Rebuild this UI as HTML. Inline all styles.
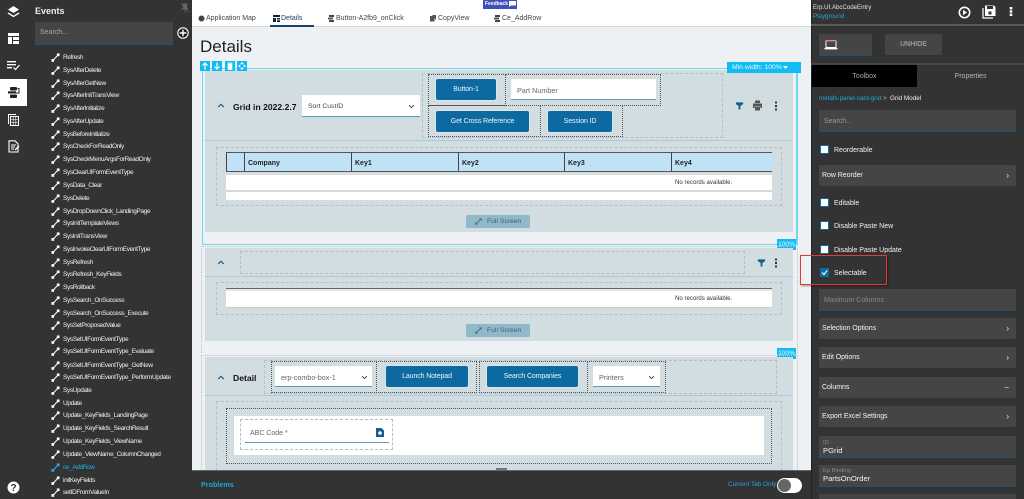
<!DOCTYPE html>
<html><head><meta charset="utf-8"><title>Details</title>
<style>
html,body{margin:0;padding:0;width:1024px;height:499px;overflow:hidden;background:#eef1f4;font-family:"Liberation Sans",sans-serif}
.a{position:absolute;box-sizing:border-box}
.t{position:absolute;white-space:nowrap;line-height:12px;height:12px}
.side{left:0;top:0;width:192px;height:499px;background:#333}
.ev{position:absolute;left:63px;margin-top:1px;font-size:6.5px;letter-spacing:-.37px;line-height:10px;color:#f0f0f0;white-space:nowrap}
.ev svg{position:absolute;left:-12px;top:0}
.card{background:#d2dde1}
.btn{position:absolute;background:#0c6aa0;color:#eef6fa;border-radius:2px;font-size:7px;letter-spacing:-.12px;text-align:center;line-height:22px;height:21px;box-shadow:0 0 0 1px #dbe6ea}
.dd{position:absolute;border:1px dotted #555;box-sizing:border-box}
.dl{position:absolute;border:1px dashed #b5c0c4;box-sizing:border-box}
.inp{position:absolute;background:#fff;border-bottom:1px solid #5c9ac4;box-sizing:border-box;font-size:7px;color:#666;padding-left:6px;height:21px;line-height:24px}
.th{position:absolute;top:152px;height:20px;line-height:21px;background:#bfe2f6;font-size:7px;font-weight:bold;color:#222;padding-left:3px;box-sizing:border-box;border-top:1px solid #555;border-bottom:1px solid #555;border-left:1px solid #444}
.fs{position:absolute;left:466px;width:64px;height:13px;background:#8fb9c9;border-radius:2px;font-size:6.8px;line-height:13px;color:#465c68;padding-left:21px;box-sizing:border-box}
.tag{position:absolute;background:#12bcf2;color:#eefaff;font-size:6.6px;text-align:center;line-height:11px;height:11px}
.row{position:absolute;left:819px;width:197px;background:#454545;border-radius:2px;height:21px;line-height:21.5px;font-size:7px;letter-spacing:-.05px;color:#f4f4f4;padding-left:3px;box-sizing:border-box}
.row i{position:absolute;right:7px;top:0;font-style:normal;font-size:8px}
.chk{position:absolute;left:820px;width:9px;height:9px;background:#fff;border:1px solid #0c6aa0;box-sizing:border-box}
.lbl{position:absolute;left:834px;margin-top:1px;font-size:7px;color:#f2f2f2;line-height:10px;white-space:nowrap}
.fld{position:absolute;left:819px;width:197px;height:22px;background:#454545;border-bottom:1px solid #14567f;box-sizing:border-box}
.tab{position:absolute;top:14px;font-size:7px;color:#444;line-height:10px;white-space:nowrap}
</style></head><body>

<svg width="0" height="0" style="position:absolute"><defs>
<symbol id="ln" viewBox="0 0 10 10"><path d="M2 8.5 L8 2" stroke="#fff" stroke-width="1.2"/><rect x="0.5" y="6.8" width="3" height="3" fill="#fff"/><rect x="6.5" y="0.5" width="3" height="3" fill="#fff"/></symbol>
<symbol id="lb" viewBox="0 0 10 10"><path d="M2 8.5 L8 2" stroke="#1fb0e6" stroke-width="1.2"/><rect x="0.5" y="6.8" width="3" height="3" fill="#1fb0e6"/><rect x="6.5" y="0.5" width="3" height="3" fill="#1fb0e6"/></symbol>
<symbol id="flt" viewBox="0 0 10 10"><path d="M1 1.5H9V3.5L6 5.5V9.5H4V5.5L1 3.5Z" fill="#155f8e"/></symbol>
<symbol id="dots" viewBox="0 0 4 10"><rect x="1" y="0.5" width="2" height="2" fill="#333"/><rect x="1" y="4" width="2" height="2" fill="#333"/><rect x="1" y="7.5" width="2" height="2" fill="#333"/></symbol>
<symbol id="up" viewBox="0 0 10 6"><path d="M1.5 4.8 L5 1.5 L8.5 4.8" stroke="#155f8e" stroke-width="1.5" fill="none"/></symbol>
<symbol id="dn" viewBox="0 0 10 6"><path d="M1.5 1.2 L5 4.5 L8.5 1.2" stroke="#333" stroke-width="1.2" fill="none"/></symbol>
<symbol id="ex" viewBox="0 0 10 10"><path d="M3 7 L7 3" stroke="#4d6470" stroke-width="1"/><path d="M5.5 1.5H8.5V4.5Z M1.5 5.5V8.5H4.5Z" fill="#4d6470"/></symbol>
</defs></svg>

<!-- left sidebar -->
<div class="a side"></div>
<div class="a" style="left:0;top:79px;width:27px;height:27px;background:#fff"></div>
<svg class="a" style="left:7px;top:5px" width="13" height="13" viewBox="0 0 13 13"><path d="M6.5 1 L12 4.6 L6.5 8 L1 4.6Z" fill="#fff"/><path d="M1.5 7.5 L6.5 10.6 L11.5 7.5 L12.5 8.5 L6.5 12.3 L.5 8.5Z" fill="#fff"/></svg>
<svg class="a" style="left:8px;top:33px" width="11" height="11" viewBox="0 0 11 11"><path d="M0 0H11V3H0Z M0 4H4V11H0Z M5 4H11V7H5Z M5 8H11V11H5Z" fill="#fff"/></svg>
<svg class="a" style="left:7px;top:60px" width="13" height="11" viewBox="0 0 13 11"><path d="M0 1H9V2.4H0Z M0 4H9V5.4H0Z M0 7H5V8.4H0Z" fill="#fff"/><path d="M6.5 7.5 L8.5 9.5 L12.5 5" stroke="#fff" stroke-width="1.2" fill="none"/></svg>
<svg class="a" style="left:7px;top:86px" width="13" height="13" viewBox="0 0 13 13"><rect x="3" y="1" width="7" height="3.5" rx="1" fill="#222"/><rect x="3" y="8.5" width="7" height="3.5" rx="1" fill="#222"/><rect x="1" y="5.3" width="8" height="2.2" fill="#222"/><path d="M10.5 2.5H12V7H9" stroke="#222" fill="none"/></svg>
<svg class="a" style="left:8px;top:114px" width="11" height="12" viewBox="0 0 11 12"><rect x="2.5" y="2.5" width="8" height="9" fill="none" stroke="#fff"/><path d="M2.5 5.5H10.5 M2.5 8.5H10.5 M5.2 2.5V11.5 M7.8 2.5V11.5" stroke="#fff" stroke-width=".6"/><path d="M.5 10V.5H8" stroke="#fff" fill="none"/></svg>
<svg class="a" style="left:8px;top:140px" width="12" height="13" viewBox="0 0 12 13"><path d="M1 .8H7L10 3.8V12H1Z" fill="none" stroke="#fff" stroke-width="1.1"/><path d="M3 5H8M3 7H7M3 9H6" stroke="#fff" stroke-width=".9"/><path d="M7 10 L11 6" stroke="#fff" stroke-width="1.4"/></svg>
<svg class="a" style="left:7px;top:481px" width="13" height="13" viewBox="0 0 13 13"><circle cx="6.5" cy="6.5" r="6" fill="#fff"/><text x="6.5" y="10" font-size="10" font-weight="bold" text-anchor="middle" font-family="Liberation Sans" fill="#333">?</text></svg>

<div class="t" style="left:35px;top:5px;font-size:9px;font-weight:bold;color:#eee">Events</div>
<svg class="a" style="left:180px;top:3px" width="9" height="10" viewBox="0 0 9 10"><path d="M3 1H7L6.5 4.5L8 6H2L3.5 4.5Z M5 6V9.5 M1 .5L8.5 9" stroke="#666" fill="#666" stroke-width=".7"/></svg>
<div class="a" style="left:35px;top:22px;width:138px;height:23px;background:#454545;border-bottom:1px solid #14567f;font-size:7px;line-height:22px;color:#aaa;padding-left:5px">Search...</div>
<svg class="a" style="left:177px;top:27px" width="12" height="12" viewBox="0 0 12 12"><circle cx="6" cy="6" r="5.2" fill="#222" stroke="#fff" stroke-width="1.1"/><path d="M6 2.7V9.3M2.7 6H9.3" stroke="#fff" stroke-width="1.4"/></svg>

<div class="ev" style="top:52px"><svg width="9" height="9"><use href="#ln"/></svg>Refresh</div>
<div class="ev" style="top:65px"><svg width="9" height="9"><use href="#ln"/></svg>SysAfterDelete</div>
<div class="ev" style="top:78px"><svg width="9" height="9"><use href="#ln"/></svg>SysAfterGetNew</div>
<div class="ev" style="top:90px"><svg width="9" height="9"><use href="#ln"/></svg>SysAfterInitTransView</div>
<div class="ev" style="top:103px"><svg width="9" height="9"><use href="#ln"/></svg>SysAfterInitialize</div>
<div class="ev" style="top:116px"><svg width="9" height="9"><use href="#ln"/></svg>SysAfterUpdate</div>
<div class="ev" style="top:129px"><svg width="9" height="9"><use href="#ln"/></svg>SysBeforeInitialize</div>
<div class="ev" style="top:141px"><svg width="9" height="9"><use href="#ln"/></svg>SysCheckForReadOnly</div>
<div class="ev" style="top:154px"><svg width="9" height="9"><use href="#ln"/></svg>SysCheckMenuArgsForReadOnly</div>
<div class="ev" style="top:167px"><svg width="9" height="9"><use href="#ln"/></svg>SysClearUIFormEventType</div>
<div class="ev" style="top:180px"><svg width="9" height="9"><use href="#ln"/></svg>SysData_Clear</div>
<div class="ev" style="top:193px"><svg width="9" height="9"><use href="#ln"/></svg>SysDelete</div>
<div class="ev" style="top:206px"><svg width="9" height="9"><use href="#ln"/></svg>SysDropDownClick_LandingPage</div>
<div class="ev" style="top:218px"><svg width="9" height="9"><use href="#ln"/></svg>SysInitTemplateViews</div>
<div class="ev" style="top:231px"><svg width="9" height="9"><use href="#ln"/></svg>SysInitTransView</div>
<div class="ev" style="top:244px"><svg width="9" height="9"><use href="#ln"/></svg>SysInvokeClearUIFormEventType</div>
<div class="ev" style="top:257px"><svg width="9" height="9"><use href="#ln"/></svg>SysRefresh</div>
<div class="ev" style="top:269px"><svg width="9" height="9"><use href="#ln"/></svg>SysRefresh_KeyFields</div>
<div class="ev" style="top:282px"><svg width="9" height="9"><use href="#ln"/></svg>SysRollback</div>
<div class="ev" style="top:295px"><svg width="9" height="9"><use href="#ln"/></svg>SysSearch_OnSuccess</div>
<div class="ev" style="top:308px"><svg width="9" height="9"><use href="#ln"/></svg>SysSearch_OnSuccess_Execute</div>
<div class="ev" style="top:320px"><svg width="9" height="9"><use href="#ln"/></svg>SysSetProposedValue</div>
<div class="ev" style="top:334px"><svg width="9" height="9"><use href="#ln"/></svg>SysSetUIFormEventType</div>
<div class="ev" style="top:346px"><svg width="9" height="9"><use href="#ln"/></svg>SysSetUIFormEventType_Evaluate</div>
<div class="ev" style="top:360px"><svg width="9" height="9"><use href="#ln"/></svg>SysSetUIFormEventType_GetNew</div>
<div class="ev" style="top:372px"><svg width="9" height="9"><use href="#ln"/></svg>SysSetUIFormEventType_PerformUpdate</div>
<div class="ev" style="top:385px"><svg width="9" height="9"><use href="#ln"/></svg>SysUpdate</div>
<div class="ev" style="top:398px"><svg width="9" height="9"><use href="#ln"/></svg>Update</div>
<div class="ev" style="top:410px"><svg width="9" height="9"><use href="#ln"/></svg>Update_KeyFields_LandingPage</div>
<div class="ev" style="top:423px"><svg width="9" height="9"><use href="#ln"/></svg>Update_KeyFields_SearchResult</div>
<div class="ev" style="top:436px"><svg width="9" height="9"><use href="#ln"/></svg>Update_KeyFields_ViewName</div>
<div class="ev" style="top:449px"><svg width="9" height="9"><use href="#ln"/></svg>Update_ViewName_ColumnChanged</div>
<div class="ev" style="top:462px;color:#1fb0e6"><svg width="9" height="9"><use href="#lb"/></svg>ce_AddRow</div>
<div class="ev" style="top:475px"><svg width="9" height="9"><use href="#ln"/></svg>initKeyFields</div>
<div class="ev" style="top:487px"><svg width="9" height="9"><use href="#ln"/></svg>setIDFromValueIn</div>

<!-- top tabs -->
<div class="a" style="left:192px;top:0;width:619px;height:27px;background:#fff;border-bottom:1px solid #d5d8da"></div>
<div class="tab" style="left:206px">Application Map</div>
<svg class="a" style="left:198px;top:15px" width="7" height="7" viewBox="0 0 7 7"><circle cx="3.5" cy="3.5" r="3" fill="#444"/></svg>
<svg class="a" style="left:273px;top:15px" width="7" height="7" viewBox="0 0 7 7"><path d="M0 0H7V2H0Z M0 3H3V7H0Z M4 3H7V4.5H4Z M4 5.3H7V7H4Z" fill="#123"/></svg>
<div class="tab" style="left:281px;color:#1d3a56">Details</div>
<div class="a" style="left:270px;top:25px;width:44px;height:1.5px;background:#15406a"></div>
<svg class="a" style="left:328px;top:15px" width="6" height="7" viewBox="0 0 6 7"><path d="M1 0H6V2H1Z M0 2.6H5V4.4H0Z M1 5H6V7H1Z" fill="#444"/></svg>
<div class="tab" style="left:336px">Button-A2fb9_onClick</div>
<svg class="a" style="left:430px;top:15px" width="6" height="7" viewBox="0 0 6 7"><path d="M0 1H4.5V6.5H0Z M2 0H6V5" fill="#555"/></svg>
<div class="tab" style="left:438px">CopyView</div>
<svg class="a" style="left:494px;top:15px" width="6" height="7" viewBox="0 0 6 7"><path d="M1 0H6V2H1Z M0 2.6H5V4.4H0Z M1 5H6V7H1Z" fill="#444"/></svg>
<div class="tab" style="left:502px">Ce_AddRow</div>
<div class="a" style="left:483px;top:0;width:34px;height:9px;background:#3f51b5;color:#fff;font-size:5px;font-weight:bold;line-height:8px;padding-left:2px">Feedback</div>
<svg class="a" style="left:509px;top:1px" width="7" height="6" viewBox="0 0 7 6"><path d="M0 0H7V4.5H2L0 6Z" fill="#fff"/></svg>

<div class="t" style="left:200px;top:36px;height:22px;line-height:22px;font-size:17px;color:#222">Details</div>

<!-- panel 1 -->
<div class="a" style="left:202px;top:68px;width:596px;height:177px;border:1px solid #6fd6f5;border-right-width:2px"></div>
<div class="a card" style="left:205px;top:70px;width:588px;height:162px"></div>
<div class="a" style="left:205px;top:140px;width:588px;height:1px;background:#a5ccdc"></div>
<svg class="a" style="left:217px;top:103px" width="8" height="5"><use href="#up"/></svg>
<div class="t" style="left:233px;top:100px;margin-top:1px;font-size:8.6px;font-weight:bold;color:#111">Grid in 2022.2.7</div>
<div class="inp" style="left:302px;top:95px;width:118px;height:22px;line-height:23px;color:#444;font-size:6.8px">Sort CustID</div>
<svg class="a" style="left:408px;top:104px" width="7" height="5"><use href="#dn"/></svg>

<div class="dl" style="left:422px;top:73px;width:301px;height:65px"></div>
<div class="dd" style="left:428px;top:74px;width:78px;height:32px;border-width:1.5px"></div>
<div class="dd" style="left:505px;top:74px;width:156px;height:32px;border-width:1.5px"></div>
<div class="dd" style="left:428px;top:105px;width:113px;height:32px;border-width:1.5px"></div>
<div class="dd" style="left:540px;top:105px;width:83px;height:32px;border-width:1.5px"></div>
<div class="btn" style="left:436px;top:79px;width:60px">Button-1</div>
<div class="inp" style="left:511px;top:79px;width:145px;font-size:7.2px">Part Number</div>
<div class="btn" style="left:436px;top:111px;width:93px">Get Cross Reference</div>
<div class="btn" style="left:548px;top:111px;width:64px">Session ID</div>
<svg class="a" style="left:735px;top:101px" width="9" height="9"><use href="#flt"/></svg>
<svg class="a" style="left:752px;top:100px" width="11" height="11" viewBox="0 0 11 11"><path d="M3 .5H8V3H3Z M1 3.5H10V8H8.5V6.5H2.5V8H1Z M3 7H8V10.5H3Z" fill="#555"/></svg>
<svg class="a" style="left:774px;top:101px" width="4" height="10"><use href="#dots"/></svg>
<div class="tag" style="left:727px;top:62px;width:69px;padding-left:5px;text-align:left;font-size:6.8px">Min width: 100%</div>
<svg class="a" style="left:782px;top:66px" width="7" height="4" viewBox="0 0 7 4"><path d="M1 0H6L3.5 3Z" fill="#fff"/></svg>

<!-- move buttons -->
<div class="a" style="left:200px;top:61px;width:10px;height:10px;background:#12bcf2"><svg width="10" height="10" viewBox="0 0 10 10" style="display:block"><path d="M5 8.5V2M2.5 4.5L5 2L7.5 4.5" stroke="#fff" stroke-width="1.2" fill="none"/></svg></div>
<div class="a" style="left:212px;top:61px;width:10px;height:10px;background:#12bcf2"><svg width="10" height="10" viewBox="0 0 10 10" style="display:block"><path d="M5 1.5V8M2.5 5.5L5 8L7.5 5.5" stroke="#fff" stroke-width="1.2" fill="none"/></svg></div>
<div class="a" style="left:225px;top:61px;width:10px;height:10px;background:#12bcf2"><svg width="10" height="10" viewBox="0 0 10 10" style="display:block"><path d="M3 3H7V8.5H3Z M2.5 2H7.5" fill="#fff" stroke="#fff" stroke-width=".7"/></svg></div>
<div class="a" style="left:237px;top:61px;width:10px;height:10px;background:#12bcf2"><svg width="10" height="10" viewBox="0 0 10 10" style="display:block"><path d="M5 1L7 3.2H3Z M5 9L7 6.8H3Z M1 5L3.2 3.5V6.5Z M9 5L6.8 3.5V6.5Z" fill="#fff"/></svg></div>

<div class="dl" style="left:216px;top:147px;width:566px;height:59px"></div>
<div class="a" style="left:226px;top:174px;width:546px;height:26px;background:#fff"></div>
<div class="a" style="left:226px;top:173px;width:546px;height:2px;background:#dcdcdc"></div>
<div class="a" style="left:226px;top:190px;width:546px;height:1.5px;background:#d8d8d8"></div>
<div class="th" style="left:226px;width:18px"></div>
<div class="th" style="left:244px;width:107px">Company</div>
<div class="th" style="left:351px;width:107px">Key1</div>
<div class="th" style="left:458px;width:106px">Key2</div>
<div class="th" style="left:564px;width:107px">Key3</div>
<div class="th" style="left:671px;width:101px">Key4</div>
<div class="t" style="left:675px;top:177px;font-size:6.1px;color:#333">No records available.</div>
<div class="fs" style="top:215px">Full Screen<svg style="position:absolute;left:8px;top:2px" width="9" height="9"><use href="#ex"/></svg></div>

<div class="tag" style="left:777px;top:239px;width:19px">100%</div>

<!-- panel 2 -->
<div class="a" style="left:201px;top:246px;width:597px;height:107px;border-top:1px dotted #b9c4c8;border-left:1px dotted #b9c4c8;border-right:1px dotted #b9c4c8"></div>
<div class="a card" style="left:205px;top:248px;width:588px;height:93px"></div>
<div class="a" style="left:205px;top:276px;width:588px;height:1px;background:#a5ccdc"></div>
<svg class="a" style="left:217px;top:260px" width="8" height="5"><use href="#up"/></svg>
<div class="dl" style="left:240px;top:251px;width:505px;height:23px"></div>
<svg class="a" style="left:757px;top:258px" width="9" height="9"><use href="#flt"/></svg>
<svg class="a" style="left:774px;top:258px" width="4" height="10"><use href="#dots"/></svg>
<div class="dl" style="left:216px;top:282px;width:566px;height:33px"></div>
<div class="a" style="left:226px;top:288px;width:546px;height:20px;background:#fff;border-top:1px solid #666;border-bottom:1px solid #ccc"></div>
<div class="a" style="left:226px;top:289px;width:546px;height:2px;background:#e6e6e6"></div>
<div class="t" style="left:675px;top:293px;font-size:6.1px;color:#333">No records available.</div>
<div class="fs" style="top:324px">Full Screen<svg style="position:absolute;left:8px;top:2px" width="9" height="9"><use href="#ex"/></svg></div>

<div class="tag" style="left:777px;top:348px;width:19px">100%</div>

<!-- panel 3 -->
<div class="a" style="left:201px;top:355px;width:597px;height:116px;border-top:1px dotted #b9c4c8;border-left:1px dotted #b9c4c8;border-right:1px dotted #b9c4c8"></div>
<div class="a card" style="left:205px;top:357px;width:588px;height:114px"></div>
<div class="a" style="left:205px;top:395px;width:588px;height:1px;background:#a5ccdc"></div>
<svg class="a" style="left:217px;top:375px" width="8" height="5"><use href="#up"/></svg>
<div class="t" style="left:233px;top:372px;font-size:8.6px;font-weight:bold;color:#111">Detail</div>
<div class="dl" style="left:264px;top:360px;width:513px;height:34px"></div>
<div class="dd" style="left:271px;top:361px;width:106px;height:32px;border-width:1.5px"></div>
<div class="dd" style="left:376px;top:361px;width:101px;height:32px;border-width:1.5px"></div>
<div class="dd" style="left:479px;top:361px;width:109px;height:32px;border-width:1.5px"></div>
<div class="dd" style="left:587px;top:361px;width:79px;height:32px;border-width:1.5px"></div>
<div class="inp" style="left:275px;top:366px;width:97px;font-size:7.2px">erp-combo-box-1</div>
<svg class="a" style="left:361px;top:375px" width="7" height="5"><use href="#dn"/></svg>
<div class="btn" style="left:386px;top:366px;width:82px">Launch Notepad</div>
<div class="btn" style="left:487px;top:366px;width:91px">Search Companies</div>
<div class="inp" style="left:593px;top:366px;width:67px;font-size:7.2px">Printers</div>
<svg class="a" style="left:648px;top:375px" width="7" height="5"><use href="#dn"/></svg>

<div class="dl" style="left:216px;top:401px;width:566px;height:70px"></div>
<div class="dd" style="left:226px;top:408px;width:546px;height:56px;border-width:1.5px"></div>
<div class="a" style="left:234px;top:416px;width:530px;height:39px;background:#fff"></div>
<div class="dl" style="left:240px;top:419px;width:153px;height:31px"></div>
<div class="t" style="left:250px;top:428px;font-size:7px;color:#666">ABC Code *</div>
<div class="a" style="left:245px;top:442px;width:144px;height:1px;background:#5c9ac4"></div>
<svg class="a" style="left:376px;top:428px" width="8" height="9" viewBox="0 0 8 9"><path d="M0 0H5.5L8 2.5V9H0Z" fill="#155f8e"/><circle cx="4" cy="5" r="1.8" fill="#fff"/></svg>

<!-- bottom bar -->
<div class="a" style="left:192px;top:470px;width:619px;height:29px;background:#333;border-top:1px solid #666"></div>
<div class="a" style="left:496px;top:468px;width:11px;height:2px;background:#777"></div>
<div class="t" style="left:201px;top:479px;font-size:7.2px;font-weight:bold;color:#1fa6dc">Problems</div>
<div class="t" style="left:728px;top:479px;font-size:6.4px;color:#1fa6dc">Current Tab Only</div>
<div class="a" style="left:777px;top:478px;width:25px;height:15px;border-radius:8px;background:#fff"></div>
<div class="a" style="left:778px;top:479px;width:13px;height:13px;border-radius:7px;background:#666"></div>

<!-- right panel -->
<div class="a" style="left:811px;top:0;width:213px;height:499px;background:#333;border-left:1px solid #222"></div>
<div class="a" style="left:811px;top:24px;width:213px;height:2px;background:#5a5a5a"></div>
<div class="a" style="left:811px;top:63px;width:213px;height:2px;background:#454545"></div>
<div class="t" style="left:813px;top:1px;margin-top:1px;font-size:6.1px;color:#e6e6e6">Erp.UI.AbcCodeEntry</div>
<div class="t" style="left:813px;top:11px;font-size:6.2px;color:#1fa6dc">Playground</div>
<svg class="a" style="left:958px;top:6px" width="13" height="13" viewBox="0 0 13 13"><circle cx="6.5" cy="6.5" r="5.2" fill="none" stroke="#fff" stroke-width="1.6"/><path d="M5 3.7L9 6.5L5 9.3Z" fill="#fff"/></svg>
<svg class="a" style="left:982px;top:5px" width="14" height="14" viewBox="0 0 14 14"><path d="M3 .5H12L13.5 2V11H3Z" fill="#fff"/><path d="M1 3V13H11" stroke="#fff" fill="none" stroke-width="1.2"/><rect x="5" y="1" width="6" height="3" fill="#333"/><rect x="6.5" y="6.5" width="3" height="3" fill="#333"/></svg>
<svg class="a" style="left:1009px;top:6px" width="4" height="11" viewBox="0 0 4 10"><rect x=".7" y=".5" width="2.6" height="2.4" fill="#fff"/><rect x=".7" y="3.8" width="2.6" height="2.4" fill="#fff"/><rect x=".7" y="7.1" width="2.6" height="2.4" fill="#fff"/></svg>

<div class="a" style="left:819px;top:34px;width:53px;height:22px;background:#454545;border-bottom:1px solid #14567f"></div>
<svg class="a" style="left:824px;top:40px" width="14" height="10" viewBox="0 0 14 10"><rect x="2" y="1" width="10" height="6.5" fill="none" stroke="#fff" stroke-width="1"/><path d="M2 1.5H12" stroke="#c33" stroke-width=".8"/><rect x="0.5" y="8" width="13" height="1.4" fill="#fff"/></svg>
<div class="a" style="left:885px;top:34px;width:57px;height:21px;background:#454545;border-radius:2px;color:#999;font-size:7px;font-weight:bold;text-align:center;line-height:22px">UNHIDE</div>

<div class="a" style="left:812px;top:65px;width:105px;height:22px;background:#000;color:#aaa;font-size:7px;text-align:center;line-height:23px">Toolbox</div>
<div class="a" style="left:917px;top:65px;width:107px;height:22px;color:#b5b5b5;font-size:7px;text-align:center;line-height:23px">Properties</div>

<div class="t" style="left:819px;top:93px;font-size:6.4px;letter-spacing:-.1px;color:#1fa6dc">metafx-panel-card-grid</div>
<div class="t" style="left:883px;top:93px;font-size:6.4px;color:#bbb">&gt;</div>
<div class="t" style="left:890px;top:93px;font-size:6.4px;color:#f0f0f0">Grid Model</div>
<div class="fld" style="top:110px;height:22px;color:#999;font-size:7px;line-height:23px;padding-left:5px">Search..</div>

<div class="chk" style="top:145px"></div>
<div class="lbl" style="top:145px">Reorderable</div>
<div class="row" style="top:165px;line-height:22px">Row Reorder<i>›</i></div>
<div class="chk" style="top:198px"></div>
<div class="lbl" style="top:198px">Editable</div>
<div class="chk" style="top:221px"></div>
<div class="lbl" style="top:221px">Disable Paste New</div>
<div class="chk" style="top:245px"></div>
<div class="lbl" style="top:245px">Disable Paste Update</div>
<div class="chk" style="top:268px;background:#0c6aa0"><svg width="7" height="7" viewBox="0 0 7 7" style="display:block"><path d="M1 3.5L3 5.5L6.3 1.3" stroke="#fff" stroke-width="1.1" fill="none"/></svg></div>
<div class="lbl" style="top:268px">Selectable</div>
<div class="a" style="left:800px;top:255px;width:87px;height:30px;border:1.5px solid #e8392f;box-shadow:1px 1px 2px rgba(0,0,0,.4)"></div>

<div class="fld" style="top:289px;height:22px;color:#888;font-size:7px;line-height:23px;padding-left:5px">Maximum Columns</div>
<div class="row" style="top:318px">Selection Options<i>›</i></div>
<div class="row" style="top:347px">Edit Options<i>›</i></div>
<div class="row" style="top:377px">Columns<i>−</i></div>
<div class="row" style="top:406px">Export Excel Settings<i>›</i></div>
<div class="fld" style="top:436px"><div class="t" style="left:4px;top:1px;font-size:5.8px;color:#888">ID</div><div class="t" style="left:4px;top:9px;font-size:7.6px;color:#f4f4f4">PGrid</div></div>
<div class="fld" style="top:465px"><div class="t" style="left:4px;top:0;font-size:5.8px;color:#888">Ep Binding</div><div class="t" style="left:4px;top:8px;font-size:7.6px;color:#f4f4f4">PartsOnOrder</div></div>
<div class="a" style="left:819px;top:494px;width:197px;height:5px;background:#454545"></div>

</body></html>
